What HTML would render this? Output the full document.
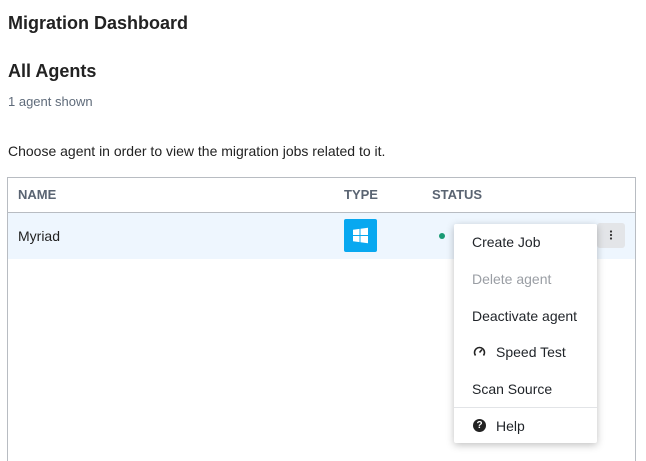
<!DOCTYPE html>
<html style="width:646px;height:461px;overflow:hidden"><head><meta charset="utf-8"><style>
*{box-sizing:border-box;margin:0;padding:0}
body{width:646px;height:461px;overflow:hidden;background:#fff;font-family:"Liberation Sans",sans-serif;color:#1f2328;position:relative}
.a{position:absolute;white-space:nowrap}
</style></head><body>
<div class="a" style="left:8px;top:13px;font-size:18px;font-weight:bold;color:#222">Migration Dashboard</div>
<div class="a" style="left:8px;top:61px;font-size:18px;font-weight:bold;color:#222">All Agents</div>
<div class="a" style="left:8px;top:94px;font-size:13px;color:#5f6b7a">1 agent shown</div>
<div class="a" style="left:8px;top:143px;font-size:14px;color:#222">Choose agent in order to view the migration jobs related to it.</div>
<div class="a" style="left:7px;top:177px;width:629px;height:285px;border:1px solid #b8bcc2"></div>
<div class="a" style="left:8px;top:212px;width:627px;height:1px;background:#b8bcc2"></div>
<div class="a" style="left:8px;top:213px;width:627px;height:46px;background:#eef6fe"></div>
<div class="a" style="left:18px;top:187px;font-size:13px;font-weight:bold;color:#5a6472">NAME</div>
<div class="a" style="left:344px;top:187px;font-size:13px;font-weight:bold;color:#5a6472">TYPE</div>
<div class="a" style="left:432px;top:187px;font-size:13px;font-weight:bold;color:#5a6472">STATUS</div>
<div class="a" style="left:18px;top:228px;font-size:14px;color:#222">Myriad</div>
<div class="a" style="left:344px;top:219px;width:33px;height:33px;background:#08a8f0;border-radius:2px">
<svg width="33" height="33" viewBox="0 0 33 33"><path fill="#fff" d="M9 10.8l6.5-.9v6.1H9zM16.5 9.8l7.5-1.1v7.3h-7.5zM9 17h6.5v6.1L9 22.2zM16.5 17H24v7.3l-7.5-1.1z"/></svg></div>
<div class="a" style="left:439px;top:233px;width:6px;height:6px;border-radius:50%;background:#1a9a74"></div>
<div class="a" style="left:597px;top:223px;width:28px;height:25px;background:#e3e5e8;border-radius:3px">
<svg width="28" height="25"><circle cx="14" cy="8.5" r="1.1" fill="#333"/><circle cx="14" cy="12" r="1.1" fill="#333"/><circle cx="14" cy="15.5" r="1.1" fill="#333"/></svg></div>
<div class="a" style="left:454px;top:224px;width:143px;height:219px;background:#fff;border-radius:2px;box-shadow:0 2px 8px rgba(0,0,0,.25)">
<div class="a" style="left:18px;top:10px;font-size:14px">Create Job</div>
<div class="a" style="left:18px;top:47px;font-size:14px;color:#9a9ea4">Delete agent</div>
<div class="a" style="left:18px;top:84px;font-size:14px">Deactivate agent</div>
<svg class="a" style="left:19px;top:121px" width="13" height="13" viewBox="0 0 13 13"><path d="M2.5 10.5A5 5 0 1 1 10.5 10.5" fill="none" stroke="#222" stroke-width="1.6"/><path d="M6.5 7.5L9 4.5" stroke="#222" stroke-width="1.6"/></svg>
<div class="a" style="left:42px;top:120px;font-size:14px">Speed Test</div>
<div class="a" style="left:18px;top:157px;font-size:14px">Scan Source</div>
<div class="a" style="left:0;top:183px;width:143px;height:1px;background:#e2e4e7"></div>
<div class="a" style="left:19px;top:195px;width:13px;height:13px;border-radius:50%;background:#222;color:#fff;font-size:10px;font-weight:bold;text-align:center;line-height:13px">?</div>
<div class="a" style="left:42px;top:194px;font-size:14px">Help</div>
</div>
</body></html>
